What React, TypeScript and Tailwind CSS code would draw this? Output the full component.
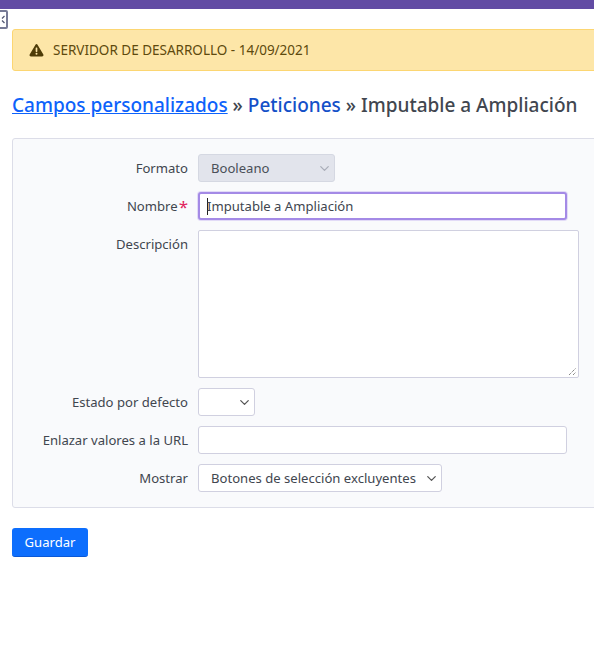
import { ChevronDown } from "lucide-react";

const labelCls = "w-[185px] shrink-0 pt-[1px] text-right pr-[10px] text-[#41464f]";
const boxCls = "h-[28px] rounded-[3px] border border-[#d0d0e0] bg-white";

const Row = ({ label, children, className }: { label: React.ReactNode; children: React.ReactNode; className?: string }) => (
  <div className={`flex ${className ?? ""}`}>
    <div className={labelCls}>{label}</div>
    {children}
  </div>
);

const App = () => {
  return (
    <div className="relative h-[665px] w-[594px] overflow-hidden bg-white font-['Noto_Sans',sans-serif] text-[13.1px] leading-[26px] text-[#41464f]">
      <div className="h-[9px] bg-[#624ba4]" />

      {/* boton del menu, cortado por el borde */}
      <div className="absolute left-[-12px] top-[10px] flex h-[19px] w-[20px] items-center justify-end rounded-[2px] border-2 border-[#777b96] pr-[1px]">
        <svg width="4" height="9" viewBox="0 0 4 9" fill="none" stroke="#555a75" strokeWidth="1.3">
          <path d="M3.5 1 1 3.5M1 5.5 3.5 8" />
        </svg>
      </div>

      <div className="px-3">
        <div className="mt-5 flex h-[42px] w-[640px] items-center rounded-[3px] border border-[#fcd672] bg-[#fde6a8] pl-4 text-[13.5px] text-[#5e4a0e]">
          <svg width="15" height="14" viewBox="0 0 16 14" className="mr-[9px] shrink-0">
            <path d="M8 .7c.5 0 .9.3 1.1.7l6.2 10.5c.5.9-.1 1.9-1.1 1.9H1.8c-1 0-1.6-1-1.1-1.9L6.9 1.4C7.1 1 7.5.7 8 .7Z" fill="#4e3c08" />
            <rect x="7.1" y="4.2" width="1.8" height="4.8" rx=".6" fill="#fde6a8" />
            <circle cx="8" cy="11" r="1.05" fill="#fde6a8" />
          </svg>
          SERVIDOR DE DESARROLLO - 14/09/2021
        </div>

        <h2 className="mt-[20px] whitespace-nowrap text-[19px] font-medium leading-[28px] text-[#41464f]">
          <a className="text-[#0d62fb] underline">Campos personalizados</a>
          {" » "}
          <a className="text-[#1450c8]">Peticiones</a>
          {" » Imputable a Ampliación"}
        </h2>

        <div className="mt-[19px] h-[370px] w-[640px] rounded-[3px] border border-[#dcdde8] bg-[#f9fafc] pt-[15px]">
          <Row label="Formato" className="h-[28px]">
            <div className="flex h-[28px] w-[137px] items-center justify-between rounded-[3px] border border-[#d5d8e2] bg-[#e2e4ec] pl-3 pr-[2px] text-[#4a4f58]">
              Booleano
              <ChevronDown size={15} className="text-[#a9adb8]" />
            </div>
          </Row>

          <Row label={<>Nombre<span className="ml-[1px] align-[-2px] text-[17px] leading-none text-[#e0245e]">*</span></>} className="mt-[10px]">
            <div className="flex h-[28px] w-[369px] items-center rounded-[3px] border-2 border-[#a48ae6] bg-white pl-[7px] shadow-[0_0_0_1px_#e2dbf7]">
              <span className="mr-[-1px] h-[17px] w-px bg-[#222]" />
              Imputable a Ampliación
            </div>
          </Row>

          <Row label="Descripción" className="mt-[10px]">
            <div className="relative h-[148px] w-[381px] rounded-[2px] border border-[#d0d0e0] bg-white">
              <svg width="9" height="9" viewBox="0 0 9 9" className="absolute bottom-[1px] right-[1px]" stroke="#555" strokeDasharray="1 1">
                <path d="M1 8 8 1M5 8 8 5" />
              </svg>
            </div>
          </Row>

          <Row label="Estado por defecto" className="mt-[10px]">
            <div className={`${boxCls} flex w-[57px] items-center justify-end pr-[2px]`}>
              <ChevronDown size={15} className="text-[#555]" />
            </div>
          </Row>

          <Row label="Enlazar valores a la URL" className="mt-[10px]">
            <div className={`${boxCls} w-[369px]`} />
          </Row>

          <Row label="Mostrar" className="mt-[10px]">
            <div className={`${boxCls} flex w-[244px] items-center justify-between pl-3 pr-[2px]`}>
              Botones de selección excluyentes
              <ChevronDown size={15} className="text-[#555]" />
            </div>
          </Row>
        </div>

        <button className="mt-5 flex h-[29px] w-[76px] items-center justify-center rounded-[3px] border-b border-[#0a58d6] bg-[#0d6efd] text-white">
          Guardar
        </button>
      </div>
    </div>
  );
};

export default App;
